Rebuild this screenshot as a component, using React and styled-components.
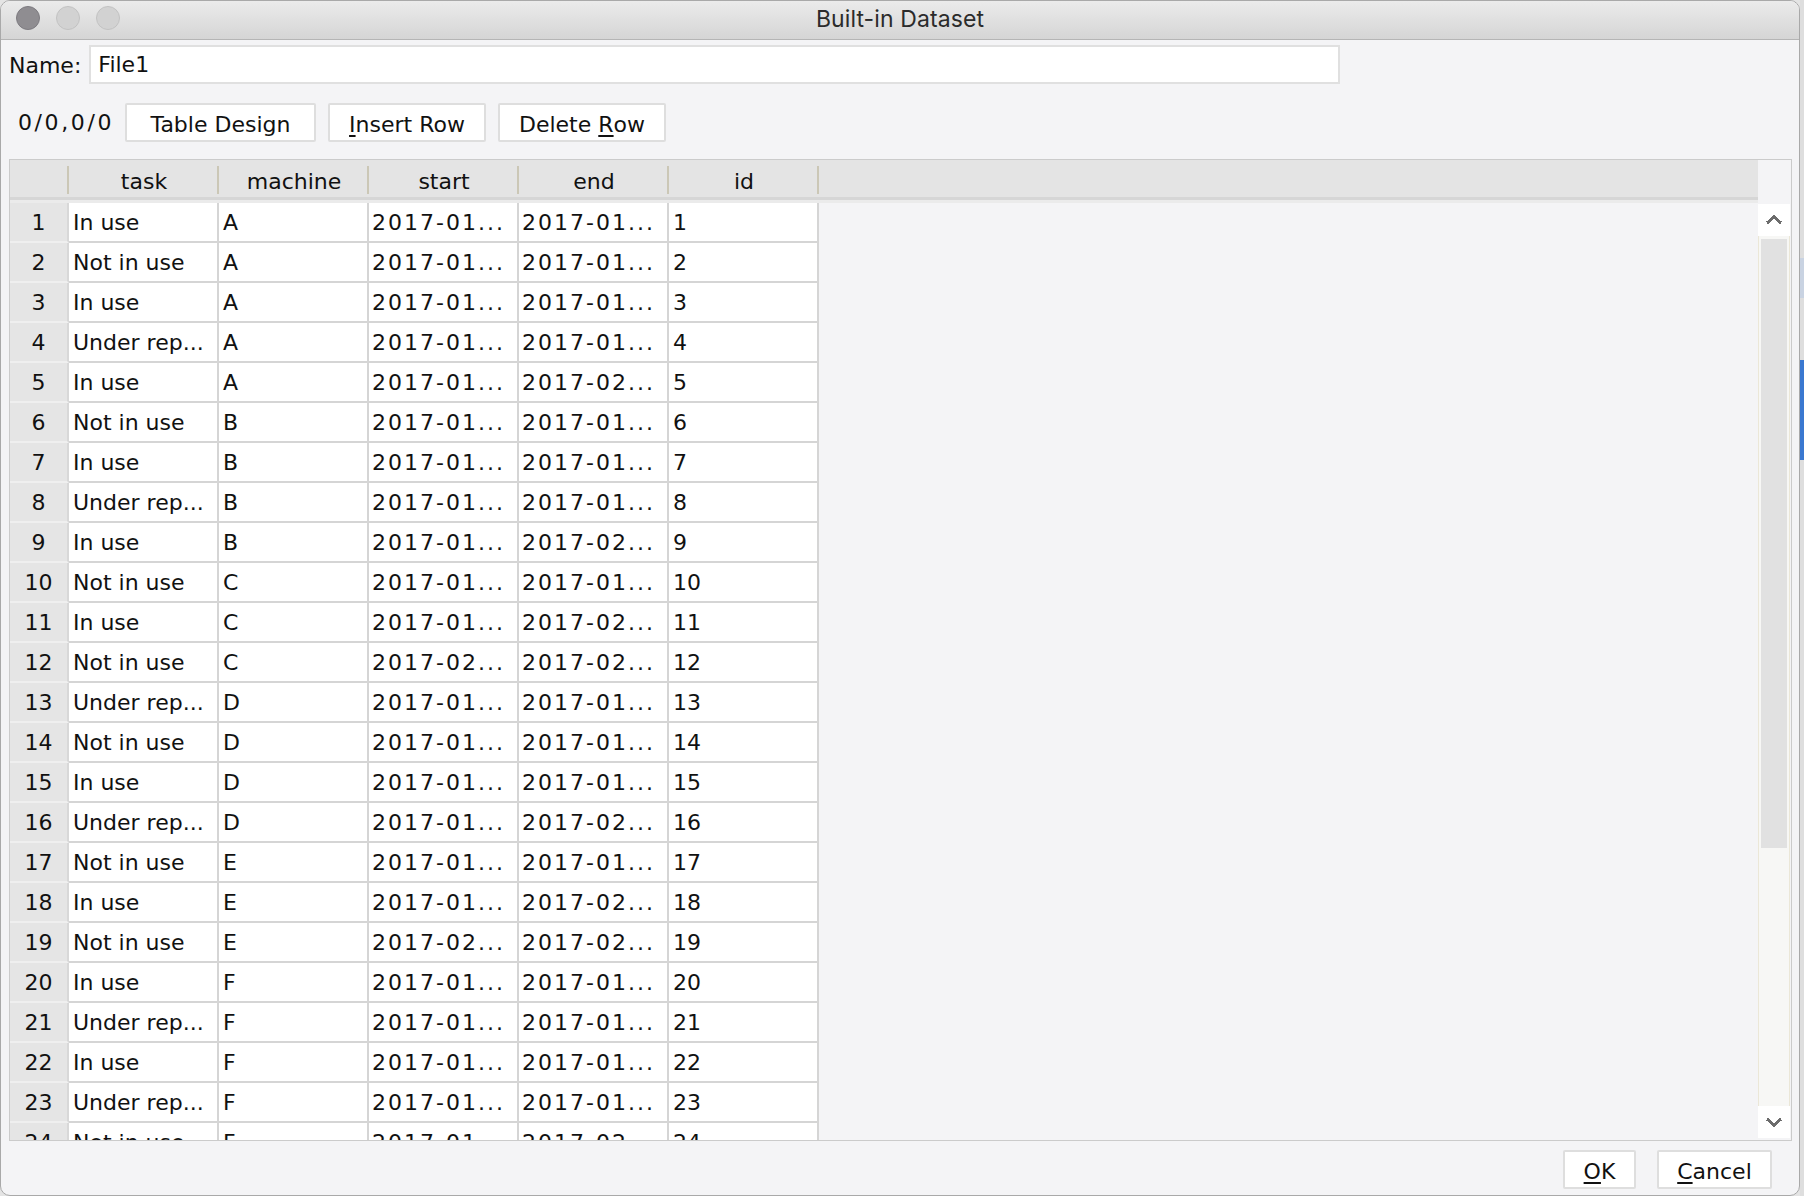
import styled, { createGlobalStyle } from 'styled-components';

const GlobalStyle = createGlobalStyle`
  html, body {
    margin: 0;
    padding: 0;
    overflow: hidden;
    background: #e4e4e4;
  }
  * {
    box-sizing: border-box;
  }
`;

const JAVA_FONT = '"DejaVu Sans", "Lucida Grande", Verdana, sans-serif';

const Screen = styled.div`
  display: flex;
  width: 1804px;
  height: 1196px;
`;

const Window = styled.div`
  display: flex;
  flex-direction: column;
  width: 1800px;
  height: 1196px;
  border: 1px solid #a9a9a9;
  border-radius: 10px;
  overflow: hidden;
  background: #f4f4f6;
  font-family: ${JAVA_FONT};
  font-size: 22px;
  color: #111;
`;

const OtherWindow = styled.div`
  flex: 1;
  display: flex;
  flex-direction: column;
  background: #dedede;
  padding-top: 258px;
`;

const OtherBlock = styled.div`
  height: ${(p) => p.$h}px;
  margin-top: ${(p) => p.$gap}px;
  background: ${(p) => p.$color};
`;

const TitleBar = styled.div`
  display: grid;
  grid-template-columns: 1fr auto 1fr;
  align-items: center;
  height: 39px;
  flex-shrink: 0;
  background: linear-gradient(to bottom, #ebebeb, #d5d5d5);
  border-bottom: 1px solid #b5b5b5;
`;

const Lights = styled.div`
  display: flex;
  gap: 16px;
  padding-left: 15px;
  padding-bottom: 4px;
`;

const Light = styled.span`
  width: 24px;
  height: 24px;
  border-radius: 50%;
  background: ${(p) => (p.$active ? '#8f8d91' : '#d2d2d2')};
  border: 1px solid ${(p) => (p.$active ? '#7d7b80' : '#c2c2c2')};
`;

const Title = styled.div`
  font-family: "Inter", "Open Sans", sans-serif;
  font-size: 23px;
  color: #2b2b2b;
  letter-spacing: 0.1px;
  padding-bottom: 2px;
`;

const Content = styled.div`
  flex: 1;
  display: flex;
  flex-direction: column;
  padding: 0 7px 0 8px;
`;

const NameRow = styled.div`
  display: flex;
  align-items: center;
  gap: 8px;
  height: 39px;
  margin-top: 5px;
`;

const NameLabel = styled.span`
  padding-top: 2px;
`;

const NameInput = styled.div`
  display: flex;
  align-items: center;
  width: 1251px;
  height: 39px;
  padding-left: 7px;
  background: #fff;
  border: 2px solid #e0e0e0;
`;

const Toolbar = styled.div`
  display: flex;
  align-items: center;
  gap: 12px;
  height: 39px;
  margin-top: 19px;
`;

const Counter = styled.span`
  margin-left: 9px;
  margin-right: -1px;
  letter-spacing: 2.6px;
  padding-bottom: 1px;
`;

const Button = styled.button`
  display: flex;
  align-items: center;
  justify-content: center;
  width: ${(p) => p.$w}px;
  height: 39px;
  padding: 3px 0 0;
  background: #fff;
  border: 2px solid #dedede;
  border-radius: 2px;
  font-family: ${JAVA_FONT};
  font-size: 22px;
  color: #111;
`;

const Mnemonic = styled.span`
  text-decoration: underline;
  text-underline-offset: 3px;
  text-decoration-thickness: 2px;
`;

const ScrollPane = styled.div`
  display: grid;
  grid-template-columns: 1fr 33px;
  grid-template-rows: 43px 1fr;
  width: 1783px;
  height: 982px;
  margin-top: 17px;
  border: 1px solid #cbcbcb;
`;

const HeaderRow = styled.div`
  display: flex;
  background: linear-gradient(
    to bottom,
    #e4e4e4 0,
    #e4e4e4 37px,
    #d6d6d6 37px,
    #d6d6d6 40px,
    #ebebeb 40px
  );
`;

const HeaderCell = styled.div`
  position: relative;
  display: flex;
  align-items: center;
  justify-content: center;
  width: ${(p) => p.$w}px;
  height: 37px;
  padding-top: 6px;

  &::after {
    content: '';
    position: absolute;
    right: 0;
    top: 6px;
    width: 2px;
    height: 28px;
    background: #cbc7b6;
  }
`;

const Corner = styled.div`
  background: #f4f4f6;
`;

const Viewport = styled.div`
  overflow: hidden;
  background: #f4f4f6;
`;

const Row = styled.div`
  display: flex;
  height: 40px;
`;

const RowHead = styled.div`
  display: flex;
  align-items: center;
  justify-content: center;
  width: 59px;
  padding-top: 1px;
  background: #e5e5e5;
  border-bottom: 2px solid #efefef;
  border-right: 2px solid #d8d8d8;
`;

const Cell = styled.div`
  display: flex;
  align-items: center;
  width: 150px;
  padding-left: ${(p) => (p.$date ? 3 : 4)}px;
  padding-top: 1px;
  background: #fff;
  border-right: 2px solid #d5d5d5;
  border-bottom: 2px solid #d5d5d5;
  white-space: nowrap;
  overflow: hidden;
  letter-spacing: ${(p) => (p.$date ? '2px' : '0')};
`;

const ScrollBar = styled.div`
  display: flex;
  flex-direction: column;
  padding: 1px 1px 2px 0;
`;

const ArrowButton = styled.div`
  display: flex;
  align-items: center;
  justify-content: center;
  height: 32px;
  background: #fff;
`;

const Track = styled.div`
  flex: 1;
  padding: 3px 2px 0;
  background: #f7f7f5;
  border-left: 1px solid #ebe7d7;
  border-right: 1px solid #ebe7d7;
`;

const Thumb = styled.div`
  height: 609px;
  background: #e1e1e1;
`;

const Footer = styled.div`
  display: flex;
  justify-content: flex-end;
  gap: 21px;
  padding: 9px 20px 0 0;
`;

const Chevron = ({ down }) => (
  <svg width="18" height="10" viewBox="0 0 18 10" shapeRendering="crispEdges">
    <polyline
      points={down ? '2,2 9,8 16,2' : '2,8 9,2 16,8'}
      fill="none"
      stroke="#6c6c6c"
      strokeWidth="3"
    />
  </svg>
);

const columns = [
  { key: 'task', label: 'task' },
  { key: 'machine', label: 'machine' },
  { key: 'start', label: 'start' },
  { key: 'end', label: 'end' },
  { key: 'id', label: 'id' },
];

const raw = [
  ['In use', 'A', '01', '01'],
  ['Not in use', 'A', '01', '01'],
  ['In use', 'A', '01', '01'],
  ['Under rep...', 'A', '01', '01'],
  ['In use', 'A', '01', '02'],
  ['Not in use', 'B', '01', '01'],
  ['In use', 'B', '01', '01'],
  ['Under rep...', 'B', '01', '01'],
  ['In use', 'B', '01', '02'],
  ['Not in use', 'C', '01', '01'],
  ['In use', 'C', '01', '02'],
  ['Not in use', 'C', '02', '02'],
  ['Under rep...', 'D', '01', '01'],
  ['Not in use', 'D', '01', '01'],
  ['In use', 'D', '01', '01'],
  ['Under rep...', 'D', '01', '02'],
  ['Not in use', 'E', '01', '01'],
  ['In use', 'E', '01', '02'],
  ['Not in use', 'E', '02', '02'],
  ['In use', 'F', '01', '01'],
  ['Under rep...', 'F', '01', '01'],
  ['In use', 'F', '01', '01'],
  ['Under rep...', 'F', '01', '01'],
  ['Not in use', 'F', '01', '02'],
];

const rows = raw.map(([task, machine, s, e], i) => ({
  task,
  machine,
  start: `2017-${s}...`,
  end: `2017-${e}...`,
  id: String(i + 1),
}));

export default function App() {
  return (
    <Screen>
      <GlobalStyle />
      <Window>
        <TitleBar>
          <Lights>
            <Light $active />
            <Light />
            <Light />
          </Lights>
          <Title>Built-in Dataset</Title>
          <span />
        </TitleBar>

        <Content>
          <NameRow>
            <NameLabel>Name:</NameLabel>
            <NameInput>File1</NameInput>
          </NameRow>

          <Toolbar>
            <Counter>0/0,0/0</Counter>
            <Button $w={191}>Table Design</Button>
            <Button $w={158}>
              <Mnemonic>I</Mnemonic>nsert Row
            </Button>
            <Button $w={168}>
              Delete&nbsp;<Mnemonic>R</Mnemonic>ow
            </Button>
          </Toolbar>

          <ScrollPane>
            <HeaderRow>
              <HeaderCell $w={59} />
              {columns.map((c) => (
                <HeaderCell key={c.key} $w={150}>
                  {c.label}
                </HeaderCell>
              ))}
            </HeaderRow>
            <Corner />

            <Viewport>
              {rows.map((r) => (
                <Row key={r.id}>
                  <RowHead>{r.id}</RowHead>
                  <Cell>{r.task}</Cell>
                  <Cell>{r.machine}</Cell>
                  <Cell $date>{r.start}</Cell>
                  <Cell $date>{r.end}</Cell>
                  <Cell>{r.id}</Cell>
                </Row>
              ))}
            </Viewport>

            <ScrollBar>
              <ArrowButton>
                <Chevron />
              </ArrowButton>
              <Track>
                <Thumb />
              </Track>
              <ArrowButton>
                <Chevron down />
              </ArrowButton>
            </ScrollBar>
          </ScrollPane>

          <Footer>
            <Button $w={73}>
              <Mnemonic>O</Mnemonic>K
            </Button>
            <Button $w={115}>
              <Mnemonic>C</Mnemonic>ancel
            </Button>
          </Footer>
        </Content>
      </Window>
      <OtherWindow>
        <OtherBlock $h={40} $gap={0} $color="#c9d3e2" />
        <OtherBlock $h={100} $gap={62} $color="#3a78d0" />
      </OtherWindow>
    </Screen>
  );
}
